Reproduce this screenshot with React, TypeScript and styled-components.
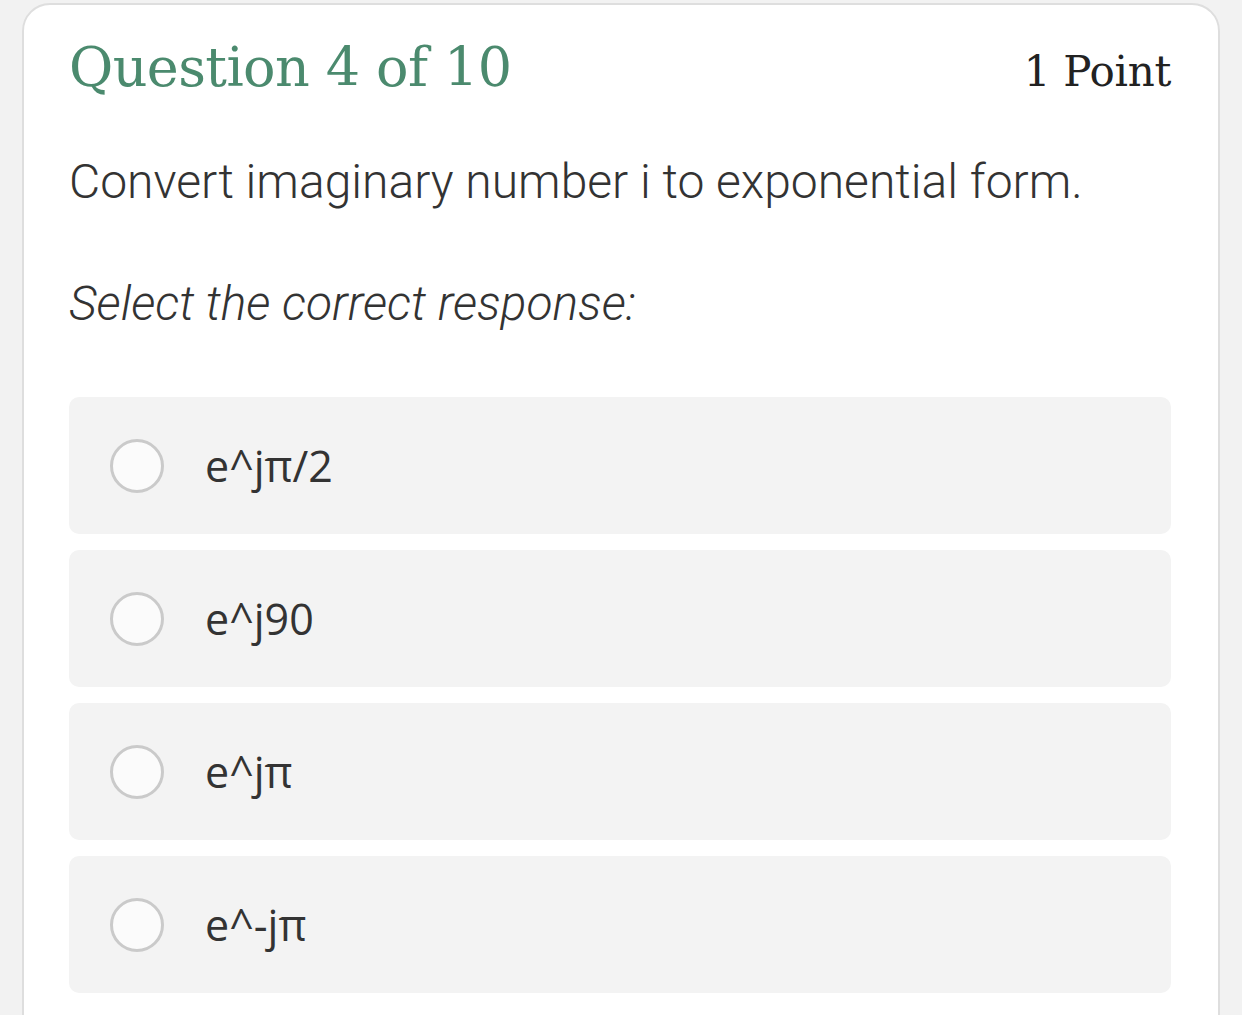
import React from 'react';
import styled, {createGlobalStyle} from "styled-components";

const GlobalStyle = createGlobalStyle`
    html, body {
        margin: 0;
        padding: 0;
        background: #f2f2f2;
        overflow: hidden;
    }
`

const options = ["e^jπ/2", "e^j90", "e^jπ", "e^-jπ"]

export default function App() {
    return (
        <>
            <GlobalStyle/>
            <Page>
                <Card>
                    <Header>
                        <Title>Question 4 of 10</Title>
                        <Points>1 Point</Points>
                    </Header>
                    <QuestionText>Convert imaginary number i to exponential form.</QuestionText>
                    <Hint>Select the correct response:</Hint>
                    <OptionList>
                        {options.map(o => (
                            <Option key={o}>
                                <Radio/>
                                <OptionLabel>{o}</OptionLabel>
                            </Option>
                        ))}
                    </OptionList>
                </Card>
            </Page>
        </>
    );
}

const Page = styled.div`
    height: 1015px;
    padding: 3px 0 0 22px;
    box-sizing: border-box;
`

const Card = styled.section`
    width: 1198px;
    min-height: 1100px;
    box-sizing: border-box;
    background: #fff;
    border: 2px solid #dedede;
    border-radius: 28px;
    padding: 31px 47px 0 45px;
`

const Header = styled.div`
    display: flex;
    justify-content: space-between;
    align-items: flex-start;
`

const Title = styled.h1`
    margin: 0;
    font-family: "DejaVu Serif", serif;
    font-weight: 400;
    font-size: 54px;
    line-height: 64px;
    color: #4b8a6e;
    letter-spacing: -0.6px;
`

const Points = styled.span`
    font-family: "DejaVu Serif", serif;
    font-size: 42px;
    line-height: 64px;
    padding-top: 4px;
    color: #222;
    letter-spacing: -0.3px;
`

const QuestionText = styled.p`
    margin: 50px 0 0;
    font-family: Roboto, "Liberation Sans", sans-serif;
    font-weight: 300;
    font-size: 48px;
    line-height: 56px;
    color: #333;
`

const Hint = styled(QuestionText)`
    margin-top: 66px;
    font-style: italic;
`

const OptionList = styled.div`
    margin-top: 65px;
    display: flex;
    flex-direction: column;
    gap: 16px;
`

const Option = styled.label`
    height: 137px;
    display: flex;
    align-items: center;
    gap: 41px;
    padding-left: 41px;
    background: #f3f3f3;
    border-radius: 10px;
`

const Radio = styled.span`
    width: 54px;
    height: 54px;
    box-sizing: border-box;
    border-radius: 50%;
    border: 3px solid #cacaca;
    background: #fbfbfb;
    flex-shrink: 0;
`

const OptionLabel = styled.span`
    font-family: "Open Sans", "Noto Sans", sans-serif;
    font-weight: 400;
    font-size: 43px;
    color: #333;
`
